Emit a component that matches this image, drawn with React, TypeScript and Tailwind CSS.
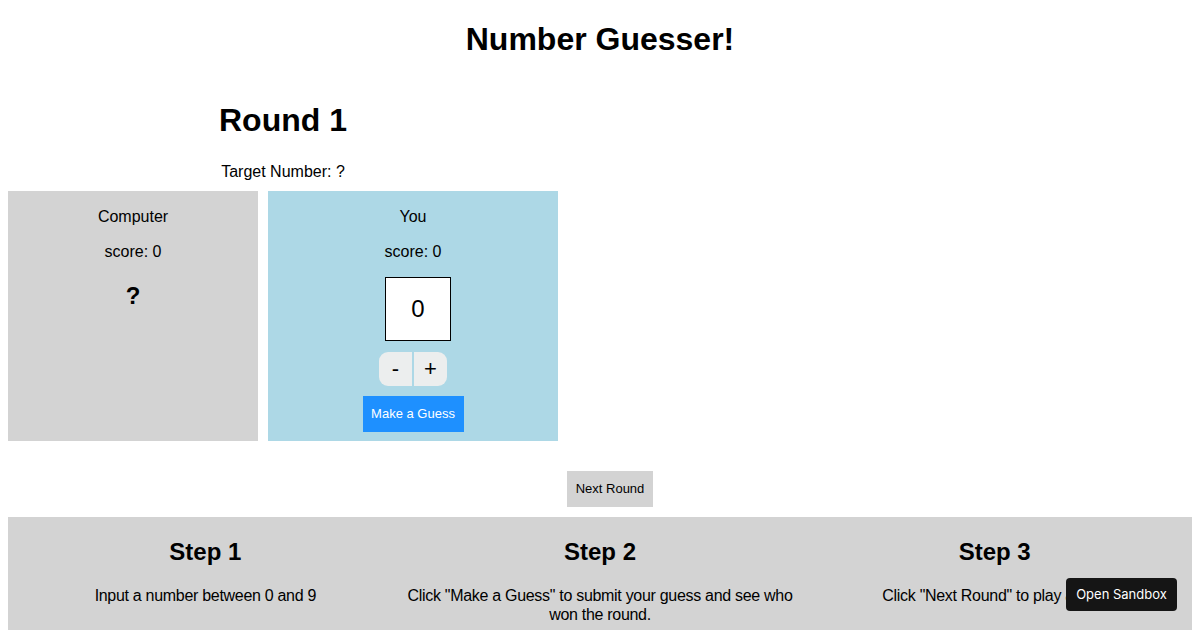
import { useState } from 'react';

const STEPS = [
  { title: 'Step 1', text: 'Input a number between 0 and 9' },
  { title: 'Step 2', text: 'Click "Make a Guess" to submit your guess and see who won the round.' },
  { title: 'Step 3', text: 'Click "Next Round" to play again.' },
];

export default function App() {
  const [guess, setGuess] = useState(0);

  return (
    <div className="relative h-[630px] overflow-hidden bg-white px-2 text-black font-['Liberation_Sans',Arial,sans-serif]">
      <h1 className="pt-[21px] text-center text-[32px] font-bold leading-[37px]">Number Guesser!</h1>

      <div className="w-[550px]">
        <h2 className="mt-[44px] text-center text-[32px] font-bold leading-[37px]">Round 1</h2>
        <p className="mt-[24px] text-center text-base leading-[18px]">Target Number: ?</p>

        <div className="mt-[10px] flex gap-[10px]">
          <div className="flex h-[250px] w-[250px] flex-col items-center bg-[#d3d3d3] pt-[17px]">
            <p className="text-base leading-[18px]">Computer</p>
            <p className="mt-[17px] text-base leading-[18px]">score: 0</p>
            <p className="mt-[21px] text-2xl font-bold leading-[28px]">?</p>
          </div>

          <div className="flex h-[250px] w-[290px] flex-col items-center bg-[#add8e6] pt-[17px]">
            <p className="text-base leading-[18px]">You</p>
            <p className="mt-[17px] text-base leading-[18px]">score: 0</p>
            <div className="ml-[10px] mt-[16px] flex h-[64px] w-[66px] items-center justify-center border border-black bg-white text-2xl">
              {guess}
            </div>
            <div className="mt-[11px] flex gap-[2px]">
              <button
                onClick={() => setGuess((g) => Math.max(0, g - 1))}
                className="h-[34px] w-[33px] rounded-l-[9px] bg-[#eceeee] text-[22px] leading-none"
              >
                -
              </button>
              <button
                onClick={() => setGuess((g) => Math.min(9, g + 1))}
                className="h-[34px] w-[33px] rounded-r-[9px] bg-[#eceeee] text-[22px] leading-none"
              >
                +
              </button>
            </div>
            <button className="mt-[10px] h-[36px] w-[101px] bg-[#1e90ff] text-[13px] text-white">Make a Guess</button>
          </div>
        </div>
      </div>

      <div className="mt-[30px] flex justify-center pl-[20px]">
        <button className="h-[36px] w-[86px] bg-[#d3d3d3] text-[13px]">Next Round</button>
      </div>

      <div className="mt-[10px] flex h-[120px] bg-[#d3d3d3]">
        {STEPS.map((s) => (
          <div key={s.title} className="flex-1 pt-[21px] text-center">
            <h3 className="text-2xl font-bold leading-[28px]">{s.title}</h3>
            <p className="mt-[20px] text-base leading-[19px] tracking-[-0.3px]">{s.text}</p>
          </div>
        ))}
      </div>

      <button className="absolute bottom-[19px] right-[23px] h-[33px] w-[111px] rounded-[4px] bg-[#151515] text-[13px] text-white font-['Inter',sans-serif]">
        Open Sandbox
      </button>
    </div>
  );
}
